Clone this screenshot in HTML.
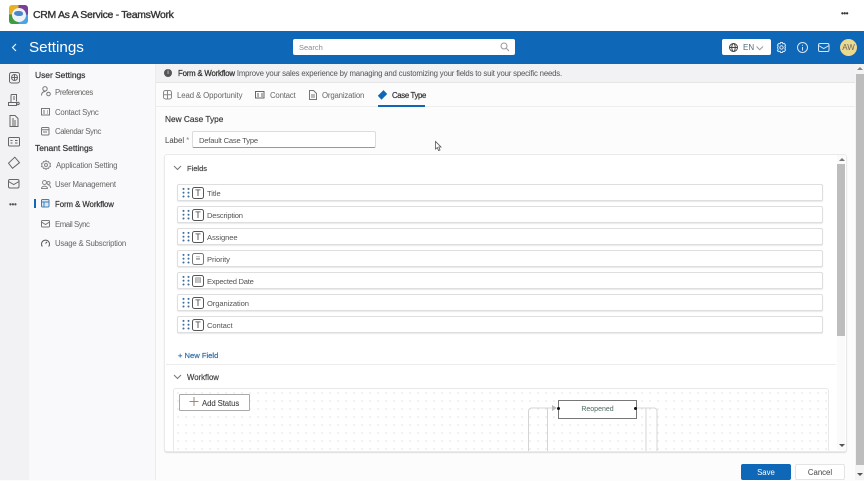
<!DOCTYPE html>
<html><head><meta charset="utf-8"><style>
html,body{margin:0;padding:0;width:864px;height:480px;overflow:hidden;background:#fdfcfd;font-family:"Liberation Sans",sans-serif;color:#444}
.a{position:absolute;white-space:nowrap;line-height:10px}
svg{position:absolute;overflow:visible;fill:none;stroke:#555;stroke-width:1}
.nav{font-size:7.8px;color:#666;margin-top:1px}
.h{font-size:8.5px;color:#333;-webkit-text-stroke:.2px #333;letter-spacing:-.05px}
.row{position:absolute;left:177px;width:644px;height:15px;background:#fff;border:1px solid #dedede;border-radius:2px;box-shadow:0 1px 1px #e8e8e8}
.row span{position:absolute;left:29px;top:4px;font-size:7.6px;line-height:10px;color:#555;letter-spacing:-.1px}
.dots{position:absolute;left:3px;top:2px;width:10px;height:11.400px;background-image:radial-gradient(circle,#3d6f9f .9px,transparent 1.1px);background-size:5px 3.800px}
.t{position:absolute;left:14px;top:1.500px;width:10px;height:10px;border:1px solid #555;border-radius:2.500px;font-size:9px;line-height:10px;text-align:center;color:#444}
</style></head><body>
<!-- title bar -->
<div class="a" style="left:0;top:0;width:864px;height:31px;background:#fff"></div>
<div class="a" style="left:9px;top:5px;width:19px;height:19px;border-radius:3px;background:conic-gradient(#7b3f98 0 25%,#4ba3e3 25% 50%,#3e9b3e 50% 75%,#e8b023 75%)"></div>
<div class="a" style="left:11.500px;top:7.500px;width:14px;height:14px;border-radius:50%;background:#eef2f7"></div>
<div class="a" style="left:14px;top:10.500px;width:9px;height:5px;border-radius:50% 50% 40% 60%;background:#4a86c9"></div>
<div class="a" style="left:33px;top:9px;font-size:10.500px;color:#333;line-height:12px;letter-spacing:-.32px;-webkit-text-stroke:.35px #333">CRM As A Service - TeamsWork</div>
<div class="a" style="left:841px;top:11px;font-size:8px;font-weight:bold;color:#333;line-height:6px;letter-spacing:-.4px">•••</div>
<!-- blue header -->
<div class="a" style="left:0;top:31px;width:864px;height:33px;background:#0f67b8"></div>
<svg style="left:11px;top:43px" width="7" height="10"><path d="M5 1 L1.500 4.500 L5 8" stroke="#fff" stroke-width="1.100"/></svg>
<div class="a" style="left:29px;top:38px;font-size:15.200px;color:#fff;line-height:19px">Settings</div>
<div class="a" style="left:293px;top:39px;width:222px;height:16px;background:#fff;border-radius:2px"></div>
<div class="a" style="left:299px;top:43px;font-size:7.500px;color:#8a8a8a;line-height:9px">Search</div>
<svg style="left:500px;top:42px" width="10" height="10"><circle cx="4" cy="4" r="3" stroke="#999"/><path d="M6.300 6.300L9 9" stroke="#999"/></svg>
<div class="a" style="left:722px;top:39px;width:49px;height:16px;background:#fff;border-radius:2px"></div>
<svg style="left:729px;top:43px" width="9" height="9"><circle cx="4.500" cy="4.500" r="4" stroke="#444"/><ellipse cx="4.500" cy="4.500" rx="1.700" ry="4" stroke="#444"/><path d="M.5 4.500h8" stroke="#444"/></svg>
<div class="a" style="left:743px;top:43px;font-size:8px;color:#4a6b80;line-height:9px">EN</div>
<svg style="left:756px;top:46px" width="8" height="5"><path d="M.5 .5L3.700 3.700L7 .5" stroke="#999"/></svg>
<svg style="left:776px;top:42px" width="11" height="11"><circle cx="5.500" cy="5.500" r="1.700" stroke="#d5e6f6"/><path d="M4.500 .5h2l.4 1.300 1.400-.4 1.300 1.700-.8 1.200.7 1.200-.7 1.200.8 1.200-1.300 1.700-1.400-.4-.4 1.300h-2l-.4-1.300-1.400.4L1.400 8.700l.8-1.200L1.500 5.500l.7-1.400-.8-1L2.700 1.400l1.400.4z" stroke="#d5e6f6"/></svg>
<svg style="left:797px;top:42px" width="11" height="11"><circle cx="5.500" cy="5.500" r="5" stroke="#d5e6f6"/><path d="M5.500 5v3.500M5.500 2.800v1" stroke="#d5e6f6"/></svg>
<svg style="left:818px;top:43px" width="12" height="10"><rect x=".5" y=".5" width="10.500" height="8" rx="1.500" stroke="#d5e6f6"/><path d="M.5 2.500L5.750 5.500L11 2.500" stroke="#d5e6f6"/></svg>
<div class="a" style="left:840px;top:39px;width:17px;height:17px;border-radius:50%;background:#ecd98f;font-size:8px;line-height:17px;text-align:center;color:#666">AW</div>
<!-- left rail -->
<div class="a" style="left:0;top:64px;width:29px;height:416px;background:#f2f1f3"></div>
<div class="a" style="left:29px;top:64px;width:126px;height:416px;background:#f9f8fa"></div>
<div class="a" style="left:155px;top:64px;width:1px;height:416px;background:#ececec"></div>
<svg style="left:9px;top:72px" width="11" height="12"><rect x=".5" y=".5" width="10" height="10.500" rx="2" stroke="#666"/><circle cx="5.500" cy="5.500" r="3" stroke="#666"/><path d="M5.500 2.500v6M2.500 5.500h6" stroke="#666"/></svg>
<svg style="left:8px;top:94px" width="12" height="12"><path d="M3 8.500V1.500a1 1 0 0 1 1-1h4.500v7M.5 11.500h8V8.500H.5zM5 3h2M5 5h2" stroke="#666"/><circle cx="10" cy="9.500" r="1.200" stroke="#666"/></svg>
<svg style="left:9px;top:115px" width="10" height="12"><path d="M1 11.500V.5h5l3 3v8zM3 4h2M3 6h4M3 8h4M3 10h4" stroke="#666"/></svg>
<svg style="left:8px;top:137px" width="12" height="10"><rect x=".5" y=".5" width="11" height="8.500" rx="1" stroke="#666"/><path d="M2.500 3.500h2M2.500 6h2M7 3.500h2.500M7 6h2.500" stroke="#666"/></svg>
<svg style="left:8px;top:156px" width="12" height="13"><path d="M6.800 1.200L11.500 6.700L4.500 12.300L.5 7.200z" stroke="#666"/></svg>
<svg style="left:8px;top:179px" width="12" height="10"><rect x=".5" y=".5" width="10.500" height="8.500" rx="1.500" stroke="#666"/><path d="M.5 2.500L5.750 5.500L11 2.500" stroke="#666"/></svg>
<div class="a" style="left:9px;top:202px;font-size:8px;font-weight:bold;color:#555;line-height:6px;letter-spacing:-.3px">•••</div>
<!-- sidebar -->
<div class="a h" style="left:35px;top:70px">User Settings</div>
<div class="a h" style="left:35px;top:143px">Tenant Settings</div>
<div class="a nav" style="left:55px;top:87px;letter-spacing:-.38px">Preferences</div>
<div class="a nav" style="left:55px;top:107px;letter-spacing:-.24px">Contact Sync</div>
<div class="a nav" style="left:55px;top:126px;letter-spacing:-.4px">Calendar Sync</div>
<div class="a nav" style="left:56px;top:160px;letter-spacing:-.17px">Application Setting</div>
<div class="a nav" style="left:55px;top:179px;letter-spacing:-.22px">User Management</div>
<div class="a nav" style="left:55px;top:199px;color:#333;-webkit-text-stroke:.2px #333;letter-spacing:-.05px">Form &amp; Workflow</div>
<div class="a nav" style="left:55px;top:219px;letter-spacing:-.45px">Email Sync</div>
<div class="a nav" style="left:55px;top:238px;letter-spacing:-.2px">Usage &amp; Subscription</div>
<svg style="left:41px;top:86px" width="10" height="11"><circle cx="4" cy="2.800" r="2.200" stroke="#777"/><path d="M.5 9.500c0-3 2-4 4-4" stroke="#777"/><circle cx="7.500" cy="8" r="1.800" stroke="#777"/></svg>
<svg style="left:41px;top:108px" width="9" height="8"><rect x=".5" y=".5" width="8" height="6.500" stroke="#777"/><path d="M2 3h2M2 5h2M6 3h1M6 5h1" stroke="#777"/></svg>
<svg style="left:41px;top:127px" width="9" height="9"><rect x=".5" y=".5" width="7.500" height="7.500" rx="1" stroke="#777"/><path d="M.5 2.800h7.500M2 5h4" stroke="#777"/></svg>
<svg style="left:41px;top:160px" width="10" height="10"><circle cx="5" cy="5" r="1.500" stroke="#888"/><path d="M5 .5l1 1.200 1.500-.2.500 1.500 1.500.5-.5 1.500.5 1.500-1.500.5-.5 1.500-1.500-.2L5 9.500 4 8.300l-1.500.2L2 7 .5 6.500 1 5 .5 3.500 2 3l.5-1.500 1.500.2z" stroke="#888"/></svg>
<svg style="left:41px;top:180px" width="10" height="9"><circle cx="3.500" cy="2.500" r="2" stroke="#888"/><circle cx="7.500" cy="3" r="1.500" stroke="#888"/><path d="M.5 8.500c0-3 6-3 6 0zM7.500 5.500c1.500 0 2.200 1 2.200 2.500" stroke="#888"/></svg>
<div class="a" style="left:34px;top:199px;width:2px;height:9px;background:#0f67b8"></div>
<svg style="left:41px;top:199px" width="9" height="9"><rect x=".5" y=".5" width="7.500" height="7.500" rx="1" stroke="#3f7fb8" fill="#dbe7f2"/><path d="M.5 3h7.500M3 3v5" stroke="#3f7fb8"/></svg>
<svg style="left:41px;top:220px" width="9" height="8"><rect x=".5" y=".5" width="8" height="6.500" rx="1" stroke="#777"/><path d="M.5 2L4.500 4.500L8.500 2" stroke="#777"/></svg>
<svg style="left:41px;top:239px" width="9" height="8"><path d="M1.300 7.500A4 4 0 1 1 7.700 7.500M4.500 4.500L6 2.800" stroke="#555"/></svg>
<!-- banner -->
<div class="a" style="left:156px;top:64px;width:699px;height:18px;background:#f2f1f3;border-bottom:1px solid #e6e6e6"></div>
<div class="a" style="left:164px;top:69px;width:8px;height:8px;border-radius:50%;background:#555;color:#fff;font-size:6px;line-height:8px;text-align:center">i</div>
<div class="a" style="left:178px;top:68px;font-size:7.800px;line-height:11px;color:#555;letter-spacing:-.185px"><span style="color:#333;-webkit-text-stroke:.25px #333">Form &amp; Workflow</span> Improve your sales experience by managing and customizing your fields to suit your specific needs.</div>
<!-- tabs -->
<div class="a" style="left:156px;top:106px;width:699px;height:1px;background:#eee"></div>
<svg style="left:163px;top:90px" width="9" height="10"><rect x=".5" y=".5" width="8" height="8.500" rx="2" stroke="#888"/><path d="M.5 4.700h8M4.500 .5v8.500" stroke="#888"/></svg>
<div class="a nav" style="left:177px;top:90px;letter-spacing:-.1px">Lead &amp; Opportunity</div>
<svg style="left:255px;top:91px" width="10" height="8"><rect x=".5" y=".5" width="8.500" height="6.500" stroke="#666"/><path d="M2 3h2M2 5h2M6 3h2M6 5h2" stroke="#666"/></svg>
<div class="a nav" style="left:270px;top:90px;letter-spacing:-.2px">Contact</div>
<svg style="left:309px;top:90px" width="8" height="10"><path d="M.5 9.500V.5h4l3 3v6zM2 5h4M2 7h4" stroke="#777"/></svg>
<div class="a nav" style="left:322px;top:90px;letter-spacing:-.17px">Organization</div>
<svg style="left:378px;top:90px" width="9" height="10"><path d="M5.500 .8L8.500 4L3.500 9L.5 5.800z" fill="#0f67b8" stroke="#0f67b8"/></svg>
<div class="a" style="left:392px;top:91px;font-size:7.800px;color:#333;-webkit-text-stroke:.2px #333;letter-spacing:-.35px">Case Type</div>
<div class="a" style="left:378px;top:105px;width:47px;height:1.500px;background:#0f67b8"></div>
<!-- form -->
<div class="a" style="left:165px;top:114px;font-size:8.300px;color:#333;-webkit-text-stroke:.15px #333">New Case Type</div>
<div class="a" style="left:165px;top:136px;font-size:7.800px;color:#444">Label <span style="color:#888">*</span></div>
<div class="a" style="left:192px;top:131px;width:182px;height:15px;background:#fff;border:1px solid #dcdcdc;border-bottom:1px solid #999;border-radius:2px"></div>
<div class="a" style="left:199px;top:136px;font-size:7.600px;color:#555;letter-spacing:-.2px">Default Case Type</div>
<svg style="left:435px;top:141px" width="7" height="10"><path d="M.5 .5V8L2.300 6.500L3.500 9.500L5 9L3.800 6H6z" fill="#fff" stroke="#555" stroke-width=".8"/></svg>
<!-- card -->
<div class="a" style="left:164px;top:154px;width:681px;height:296px;background:#fff;border:1px solid #eaeaea;border-radius:3px;box-shadow:0 1px 1px #ddd"></div>
<svg style="left:173px;top:165px" width="9" height="6"><path d="M1 1L4.500 4.500L8 1" stroke="#777"/></svg>
<div class="a" style="left:187px;top:164px;font-size:7.500px;color:#444;-webkit-text-stroke:.2px #444">Fields</div>
<div class="row" style="top:184px"><div class="dots"></div><div class="t">T</div><span>Title</span></div>
<div class="row" style="top:206px"><div class="dots"></div><div class="t">T</div><span style="letter-spacing:-.2px">Description</span></div>
<div class="row" style="top:228px"><div class="dots"></div><div class="t">T</div><span>Assignee</span></div>
<div class="row" style="top:250px"><div class="dots"></div><div class="t" style="border-color:#777;color:#777;font-size:8px">≡</div><span>Priority</span></div>
<div class="row" style="top:272px"><div class="dots"></div><div class="t" style="font-size:7px;color:#666">▤</div><span style="letter-spacing:-.25px">Expected Date</span></div>
<div class="row" style="top:294px"><div class="dots"></div><div class="t">T</div><span>Organization</span></div>
<div class="row" style="top:316px"><div class="dots"></div><div class="t">T</div><span>Contact</span></div>
<div class="a" style="left:178px;top:351px;font-size:7.600px;color:#2f6ea5;-webkit-text-stroke:.2px #2f6ea5">+ New Field</div>
<div class="a" style="left:166px;top:364px;width:670px;height:1px;background:#ececec"></div>
<svg style="left:173px;top:374px" width="9" height="6"><path d="M1 1L4.500 4.500L8 1" stroke="#777"/></svg>
<div class="a" style="left:187px;top:373px;font-size:7.800px;color:#444;-webkit-text-stroke:.2px #444">Workflow</div>
<!-- canvas -->
<div class="a" style="left:173px;top:388px;width:654px;height:62px;border:1px solid #e8e8e8;border-bottom:none;border-radius:3px 3px 0 0;background-color:#fff;background-image:radial-gradient(circle,#ececec .8px,transparent .9px);background-size:8px 8px"></div>
<div class="a" style="left:179px;top:394px;width:69px;height:15px;background:#fff;border:1px solid #aaa;border-radius:1px"></div>
<svg style="left:189px;top:397px" width="10" height="10"><path d="M5 0v9M.5 4.500h9" stroke="#a08a6a"/></svg>
<div class="a" style="left:202px;top:399px;font-size:7.800px;color:#444;-webkit-text-stroke:.1px #444;letter-spacing:-.1px">Add Status</div>
<svg style="left:525px;top:398px" width="135" height="53"><path d="M3.500 53V13a3 3 0 0 1 3-3H30M22.500 53V10M132 53V13a3 3 0 0 0-3-3H111M121 53V10" stroke="#d4d4d4"/><path d="M27 7L32 10L27 13z" fill="#bbb" stroke="none"/></svg>
<div class="a" style="left:558px;top:400px;width:77px;height:17px;background:#fff;border:1px solid #777;font-size:7px;line-height:17px;text-align:center;color:#4b6a5a">Reopened</div>
<div class="a" style="left:557px;top:407px;width:3px;height:3px;border-radius:50%;background:#111"></div>
<div class="a" style="left:634px;top:407px;width:3px;height:3px;border-radius:50%;background:#111"></div>
<!-- inner scrollbar -->
<div class="a" style="left:837px;top:155px;width:8px;height:295px;background:#fafafa"></div>
<div class="a" style="left:837px;top:164px;width:8px;height:172px;background:#bdbdbd"></div>
<div class="a" style="left:839px;top:158px;border:3px solid transparent;border-bottom:3px solid #777;border-top:none"></div>
<div class="a" style="left:839px;top:444px;border:3px solid transparent;border-top:3px solid #555;border-bottom:none"></div>
<!-- buttons -->
<div class="a" style="left:741px;top:464px;width:50px;height:16px;background:#0f67b8;border-radius:2px;color:#fff;font-size:7.800px;line-height:17px;text-align:center">Save</div>
<div class="a" style="left:795px;top:464px;width:50px;height:16px;background:#fff;border:1px solid #e4e4e4;box-sizing:border-box;border-radius:2px;color:#444;font-size:7.800px;line-height:15px;text-align:center">Cancel</div>
<!-- outer scrollbar -->
<div class="a" style="left:855px;top:64px;width:9px;height:416px;background:#f4f4f4"></div>
<div class="a" style="left:856px;top:74px;width:8px;height:391px;background:#bdbdbd"></div>
<div class="a" style="left:857px;top:67px;border:3px solid transparent;border-bottom:3px solid #888;border-top:none"></div>
<div class="a" style="left:857px;top:473px;border:3px solid transparent;border-top:3px solid #555;border-bottom:none"></div>
</body></html>
